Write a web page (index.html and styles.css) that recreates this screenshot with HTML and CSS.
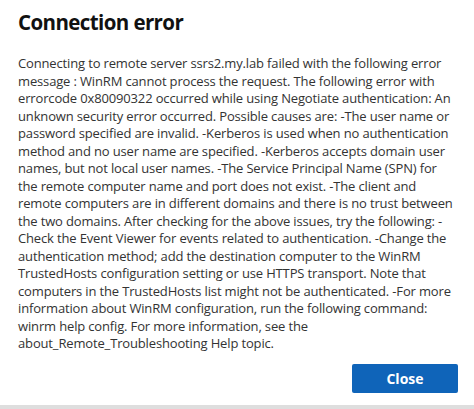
FILE: index.html
```html
<!DOCTYPE html>
<html lang="en">
<head>
<meta charset="utf-8">
<link rel="stylesheet" href="styles.css">
</head>
<body>
<div class="dialog">
  <h1 class="title">Connection error</h1>
  <p class="message">Connecting to remote server ssrs2.my.lab failed with the following error<br>message : WinRM cannot process the request. The following error with<br>errorcode 0x80090322 occurred while using Negotiate authentication: An<br>unknown security error occurred. Possible causes are: -The user name or<br>password specified are invalid. -Kerberos is used when no authentication<br>method and no user name are specified. -Kerberos accepts domain user<br>names, but not local user names. -The Service Principal Name (SPN) for<br>the remote computer name and port does not exist. -The client and<br>remote computers are in different domains and there is no trust between<br>the two domains. After checking for the above issues, try the following: -<br>Check the Event Viewer for events related to authentication. -Change the<br>authentication method; add the destination computer to the WinRM<br>TrustedHosts configuration setting or use HTTPS transport. Note that<br>computers in the TrustedHosts list might not be authenticated. -For more<br>information about WinRM configuration, run the following command:<br>winrm help config. For more information, see the<br>about_Remote_Troubleshooting Help topic.</p>
  <div class="actions">
    <button class="close-btn" type="button">Close</button>
  </div>
</div>
<div class="bottom-strip"></div>
</body>
</html>
```
FILE: styles.css
```css
html, body {
  margin: 0;
  padding: 0;
  background: #ffffff;
}
body {
  width: 474px;
  height: 409px;
  overflow: hidden;
  display: flex;
  flex-direction: column;
  font-family: "Open Sans", "Noto Sans", sans-serif;
}
.dialog {
  flex: 1;
  padding: 9px 16px 0 18px;
  display: flex;
  flex-direction: column;
}
.title {
  margin: 0;
  font-size: 20.5px;
  line-height: 26px;
  font-weight: 700;
  letter-spacing: -0.6px;
  color: #111111;
}
.message {
  margin: 20px 0 0 0;
  font-size: 13px;
  line-height: 17.5px;
  letter-spacing: -0.15px;
  color: #333333;
  white-space: nowrap;
}
.actions {
  display: flex;
  justify-content: flex-end;
  margin-top: 11px;
}
.close-btn {
  width: 106px;
  height: 29px;
  border: none;
  border-radius: 2px;
  background: #0f64b9;
  color: #ffffff;
  font-family: inherit;
  font-size: 14px;
  font-weight: 700;
  padding: 0;
}
.bottom-strip {
  height: 4px;
  background: #dedede;
}
```
